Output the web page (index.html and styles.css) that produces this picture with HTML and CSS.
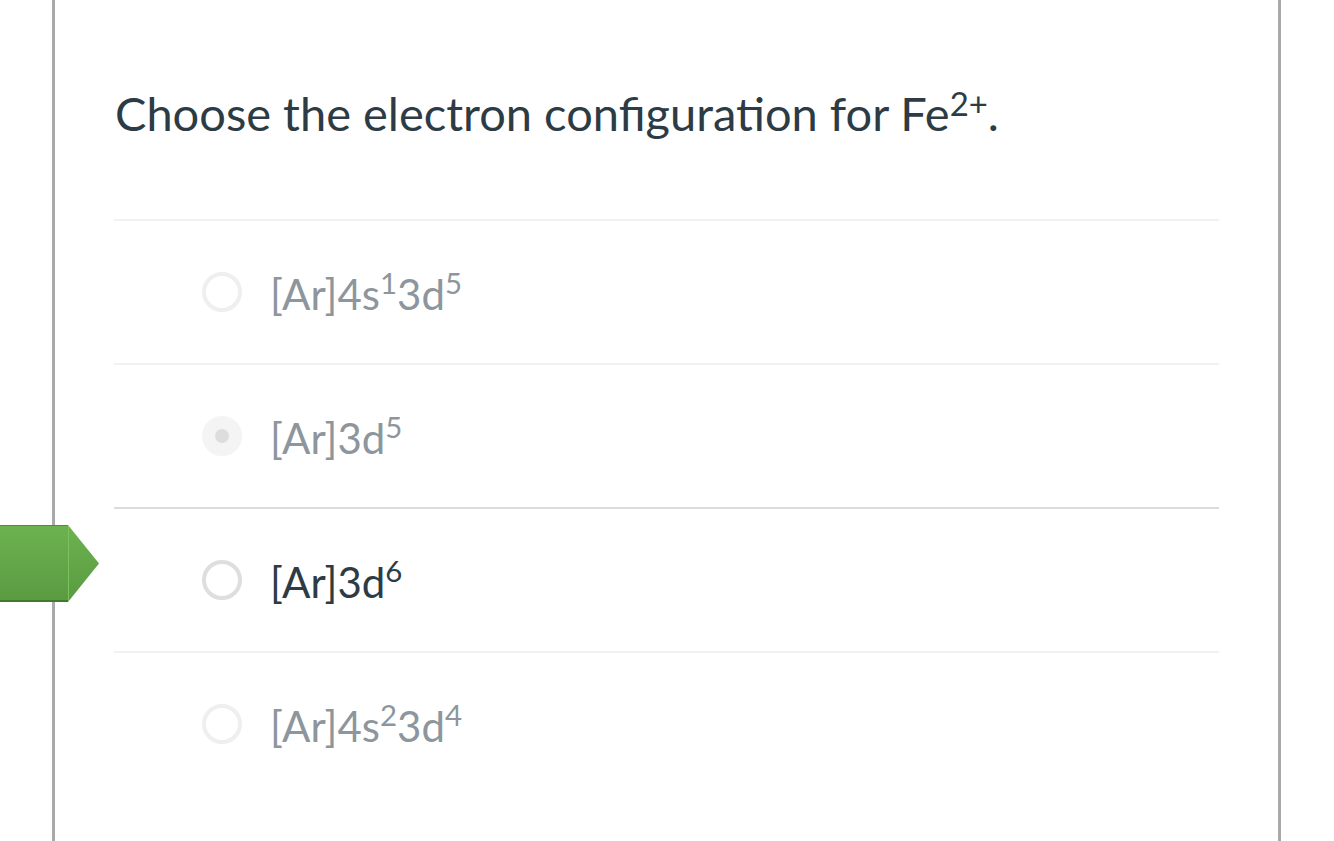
FILE: index.html
```html
<!DOCTYPE html>
<html>
<head>
<meta charset="utf-8">
<link rel="stylesheet" href="styles.css">
</head>
<body>
<div class="page">
  <div class="question">
    <h1 class="title">Choose the electron configuration for Fe<sup>2+</sup>.</h1>
    <ul class="answers">
      <li class="answer muted">
        <span class="radio"></span>
        <span class="label">[Ar]4s<sup>1</sup>3d<sup>5</sup></span>
      </li>
      <li class="answer muted">
        <span class="radio selected"></span>
        <span class="label">[Ar]3d<sup>5</sup></span>
      </li>
      <li class="answer correct">
        <span class="marker"><svg width="100" height="80" viewBox="0 0 100 80"><defs><linearGradient id="g" x1="0" y1="0" x2="0" y2="1"><stop offset="0" stop-color="#6cb350"/><stop offset="1" stop-color="#5a9a41"/></linearGradient></defs><path d="M0 1 H68 L99 39.5 L68 78 H0 Z" fill="url(#g)"/><path d="M0 77 H68" stroke="#3f7a2c" stroke-width="2"/><path d="M0 1.5 H68" stroke="#4f8c3a" stroke-width="1"/><path d="M68.5 2 V77" stroke="#7cc060" stroke-width="1"/></svg></span>
        <span class="radio"></span>
        <span class="label">[Ar]3d<sup>6</sup></span>
      </li>
      <li class="answer muted">
        <span class="radio"></span>
        <span class="label">[Ar]4s<sup>2</sup>3d<sup>4</sup></span>
      </li>
    </ul>
  </div>
</div>
</body>
</html>
```
FILE: styles.css
```css
html, body {
  margin: 0;
  padding: 0;
  background: #fff;
  height: 100%;
  overflow: hidden;
}
body {
  font-family: Lato, "Open Sans", sans-serif;
  color: #2d3b45;
}
.page {
  position: relative;
  margin-left: 52px;
  width: 1223px;
  height: 841px;
  border-left: 3px solid #a9a9a9;
  border-right: 3px solid #a9a9a9;
  box-sizing: content-box;
}
.question {
  padding: 83px 59px 0 59px;
}
.title {
  margin: 0;
  font-weight: 400;
  font-size: 47px;
  line-height: 60px;
  padding-left: 1px;
}
.title sup {
  font-size: 0.7em;
  vertical-align: 0.46em;
  line-height: 0;
}
.answers {
  list-style: none;
  margin: 76px 0 0 0;
  padding: 0;
}
.answer {
  position: relative;
  display: flex;
  align-items: center;
  box-sizing: border-box;
  height: 144px;
  border-top: 2px solid #f0f1f2;
}
.answer.correct {
  border-top-color: #dcdcdc;
}
.radio {
  box-sizing: border-box;
  width: 40px;
  height: 40px;
  border-radius: 50%;
  border: 4px solid #eeeff1;
  margin-left: 88px;
  margin-right: 28px;
  flex: none;
  display: flex;
  align-items: center;
  justify-content: center;
}
.radio.selected {
  background: #f4f4f5;
  border-color: #f4f4f5;
}
.radio.selected::after {
  content: "";
  width: 14px;
  height: 14px;
  border-radius: 50%;
  background: #dcdddf;
}
.correct .radio {
  border-color: #dedede;
}
.label {
  font-size: 42px;
  line-height: 48px;
  color: #8d969d;
  padding-top: 4px;
}
.correct .label {
  color: #2d3b45;
}
.label sup {
  font-size: 0.7em;
  vertical-align: 0.55em;
  line-height: 0;
}
.marker {
  position: absolute;
  left: -114px;
  top: 15px;
  width: 100px;
  height: 80px;
  display: block;
}
.marker svg {
  display: block;
}
```
